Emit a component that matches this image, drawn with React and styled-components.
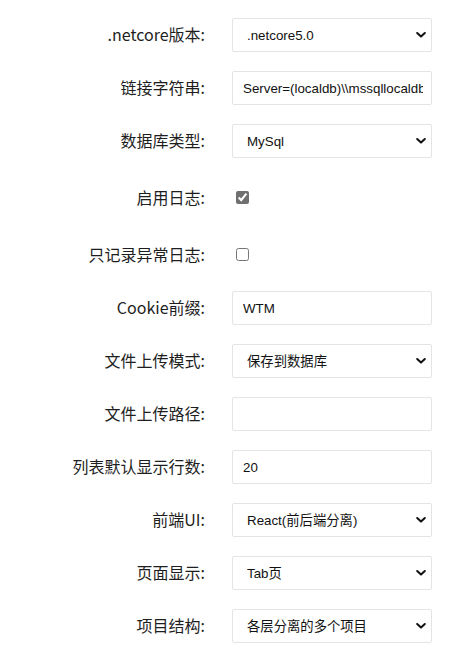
import React from "react";
import styled, { createGlobalStyle } from "styled-components";

const Global = createGlobalStyle`
  html, body { margin: 0; padding: 0; background: #fff; }
  body { font-family: "Noto Sans CJK SC", "Liberation Sans", sans-serif; }
`;

const Form = styled.div`
  display: flex;
  flex-direction: column;
  gap: 19px;
  padding-top: 18px;
  width: 470px;
`;

const Row = styled.div`
  display: grid;
  grid-template-columns: 205px 200px;
  column-gap: 27px;
  align-items: center;
  height: ${(p) => p.$h || 34}px;
`;

const Label = styled.label`
  text-align: right;
  font-family: "Noto Sans CJK SC", "Liberation Sans", sans-serif;
  font-size: 16px;
  color: #1e1e1e;
  line-height: 20px;
  padding-bottom: 2px;
  white-space: nowrap;
`;

const fieldBase = `
  box-sizing: border-box;
  display: block;
  width: 200px;
  height: 34px;
  border: 1px solid #e4e4e4;
  border-radius: 2px;
  background: #fff;
  color: #111;
  font-family: "Liberation Sans", "Noto Sans CJK SC", sans-serif;
  font-size: 13.333px;
  outline: none;
  margin: 0;
`;

const TextInput = styled.input`
  ${fieldBase}
  padding: 0 8px 0 10px;
`;

const SelectWrap = styled.div`
  position: relative;
  width: 200px;
  height: 34px;
`;

const Select = styled.select`
  ${fieldBase}
  appearance: none;
  -webkit-appearance: none;
  padding: 0 24px 0 14px;
`;

const Chevron = styled.svg`
  position: absolute;
  right: 6px;
  top: 13px;
  width: 10px;
  height: 8px;
  pointer-events: none;
`;

const CheckCell = styled.div`
  display: flex;
  align-items: center;
  height: 100%;
`;

const Check = styled.input`
  margin: 0 0 0 4px;
  width: 13px;
  height: 13px;
  accent-color: #6f6f6f;
`;

function Dropdown({ value, options }) {
  return (
    <SelectWrap>
      <Select defaultValue={value}>
        {options.map((o) => (
          <option key={o}>{o}</option>
        ))}
      </Select>
      <Chevron viewBox="0 0 10 8">
        <path d="M1.2 2 L5 5.6 L8.8 2" fill="none" stroke="#111" strokeWidth="2" strokeLinecap="round" strokeLinejoin="round" />
      </Chevron>
    </SelectWrap>
  );
}

export default function App() {
  return (
    <>
      <Global />
      <Form>
        <Row>
          <Label>.netcore版本:</Label>
          <Dropdown value=".netcore5.0" options={[".netcore5.0", ".netcore3.1"]} />
        </Row>
        <Row>
          <Label>链接字符串:</Label>
          <TextInput defaultValue="Server=(localdb)\\mssqllocaldb;Database=WTM;Trusted_Connection=True;" />
        </Row>
        <Row>
          <Label>数据库类型:</Label>
          <Dropdown value="MySql" options={["SqlServer", "MySql", "PgSql", "Oracle", "SQLite"]} />
        </Row>
        <Row $h={41}>
          <Label>启用日志:</Label>
          <CheckCell><Check type="checkbox" defaultChecked /></CheckCell>
        </Row>
        <Row $h={35}>
          <Label>只记录异常日志:</Label>
          <CheckCell><Check type="checkbox" /></CheckCell>
        </Row>
        <Row>
          <Label>Cookie前缀:</Label>
          <TextInput defaultValue="WTM" />
        </Row>
        <Row>
          <Label>文件上传模式:</Label>
          <Dropdown value="保存到数据库" options={["保存到数据库", "保存到本地"]} />
        </Row>
        <Row>
          <Label>文件上传路径:</Label>
          <TextInput defaultValue="" />
        </Row>
        <Row>
          <Label>列表默认显示行数:</Label>
          <TextInput defaultValue="20" />
        </Row>
        <Row>
          <Label>前端UI:</Label>
          <Dropdown value="React(前后端分离)" options={["LayUI", "React(前后端分离)", "Vue(前后端分离)"]} />
        </Row>
        <Row>
          <Label>页面显示:</Label>
          <Dropdown value="Tab页" options={["Tab页", "单页"]} />
        </Row>
        <Row>
          <Label>项目结构:</Label>
          <Dropdown value="各层分离的多个项目" options={["单个项目", "各层分离的多个项目"]} />
        </Row>
      </Form>
    </>
  );
}
